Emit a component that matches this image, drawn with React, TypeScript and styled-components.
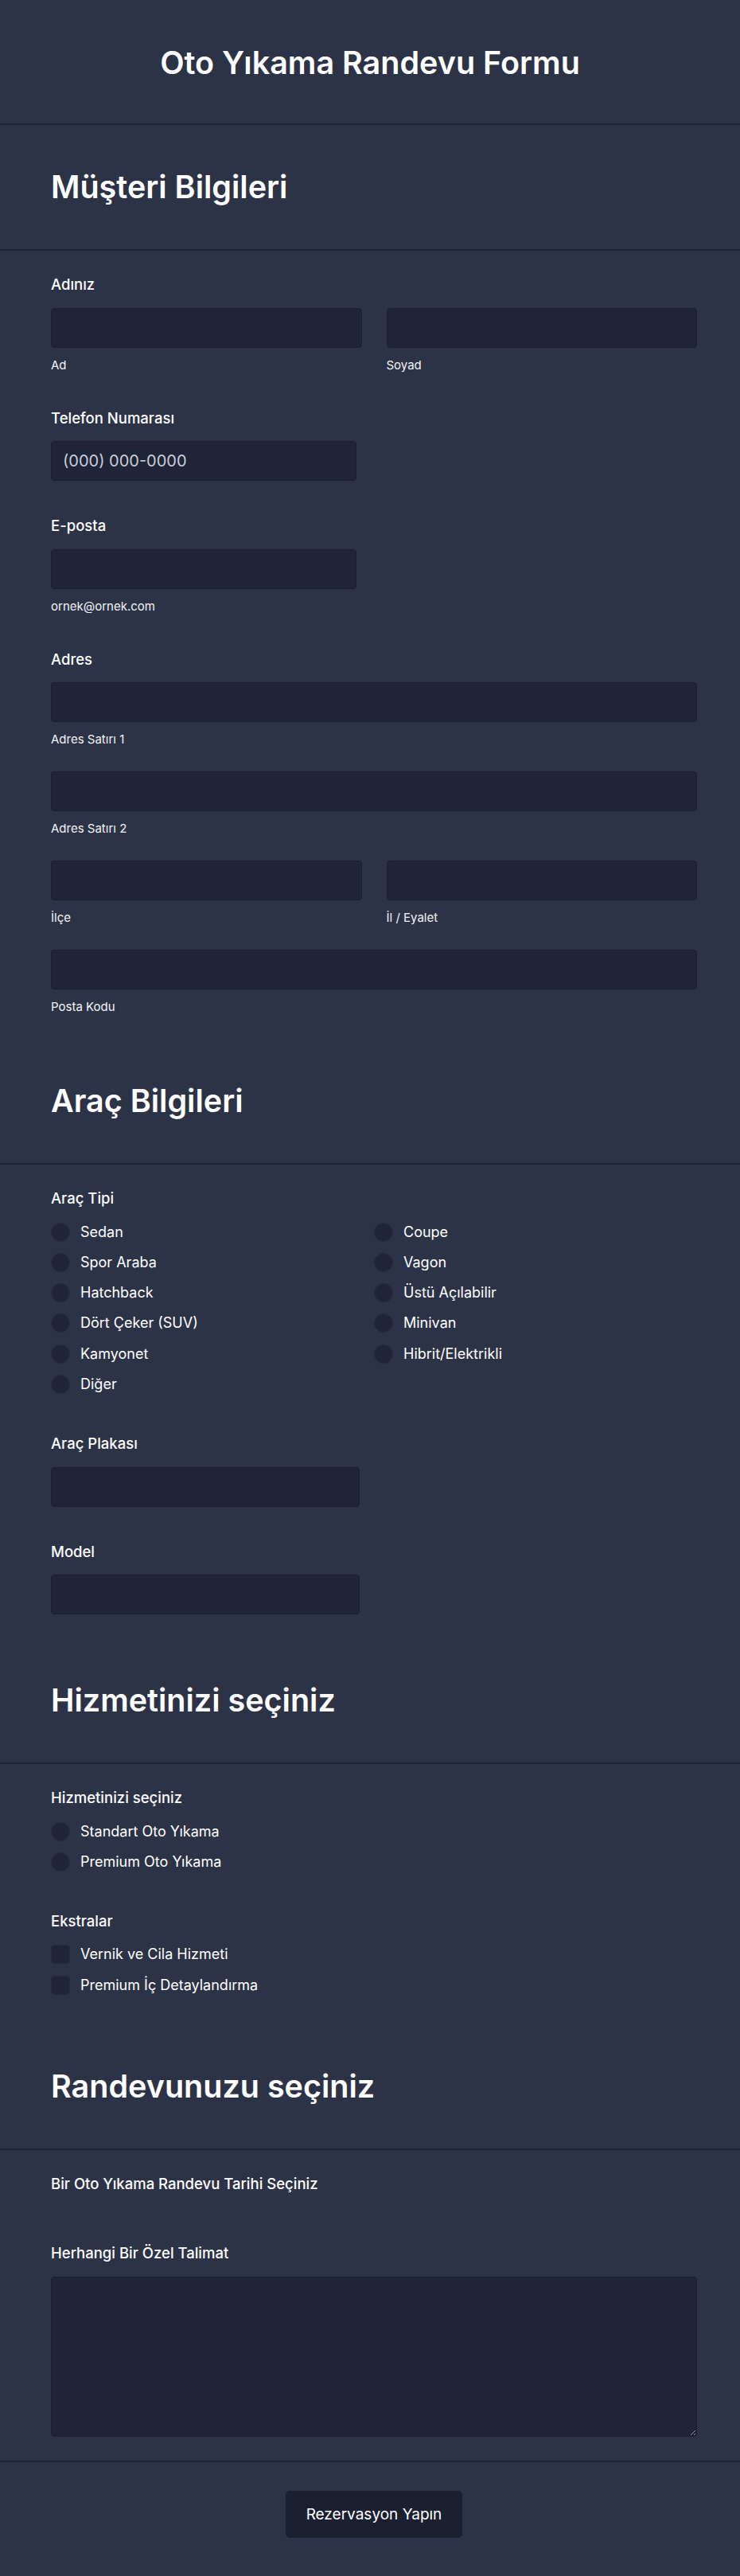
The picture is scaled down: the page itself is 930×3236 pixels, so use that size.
import React from "react";
import styled, { createGlobalStyle } from "styled-components";

const GlobalStyle = createGlobalStyle`
  * {
    box-sizing: border-box;
  }
  body {
    margin: 0;
    background: #2d3346;
    font-family: Inter, "Noto Sans", sans-serif;
    color: #ffffff;
  }
`;

const Page = styled.div`
  min-height: 3236px;
  background: #2d3346;
`;

const Header = styled.header`
  padding: 55px 64px 52px 64px;
  border-bottom: 2px solid #1e2232;
  text-align: center;
`;

const Title = styled.h1`
  margin: 0;
  font-size: 39.5px;
  line-height: 48px;
  font-weight: 600;
`;

const SectionHead = styled.div`
  padding: 54px 54px 54px 64px;
  border-bottom: 2px solid #1e2232;
`;

const Heading = styled.h2`
  margin: 0;
  font-size: 39.5px;
  line-height: 48px;
  font-weight: 600;
`;

const Fields = styled.div`
  padding: 30px 54px 30px 64px;
  display: flex;
  flex-direction: column;
`;

const Field = styled.div<{ $extra?: number }>`
  display: flex;
  flex-direction: column;
  margin-bottom: ${(p) => 44 + (p.$extra ?? 0)}px;

  &:last-child {
    margin-bottom: ${(p) => p.$extra ?? 0}px;
  }
`;

const Label = styled.label`
  font-size: 18.5px;
  line-height: 24px;
  font-weight: 500;
  margin-bottom: 17.5px;
`;

const Row = styled.div`
  display: grid;
  grid-template-columns: 1fr 1fr;
  column-gap: 31px;
`;

const Stack = styled.div`
  display: flex;
  flex-direction: column;
  gap: 30px;
`;

const Cell = styled.div`
  display: flex;
  flex-direction: column;
`;

const Input = styled.input<{ $width?: number }>`
  width: ${(p) => (p.$width ? `${p.$width}px` : "100%")};
  height: 50px;
  padding: 0 14px;
  background: #1f2437;
  border: 1px solid #1b1f30;
  border-radius: 4px;
  color: #ffffff;
  font-family: Inter, "Noto Sans", sans-serif;
  font-size: 20px;
  outline: none;

  &::placeholder {
    color: #c9ceda;
  }
`;

const TextArea = styled.textarea`
  width: 100%;
  height: 201px;
  padding: 12px 14px;
  background: #1f2437;
  border: 1px solid #1b1f30;
  border-radius: 4px;
  color: #ffffff;
  font-family: Inter, "Noto Sans", sans-serif;
  font-size: 18px;
  outline: none;
  display: block;
`;

const SubLabel = styled.span`
  margin-top: 12px;
  font-size: 15px;
  line-height: 20px;
  color: #f2f3f6;
`;

const Options = styled.div<{ $cols?: number }>`
  display: grid;
  grid-template-columns: repeat(${(p) => p.$cols ?? 1}, 1fr);
  grid-auto-flow: ${(p) => ((p.$cols ?? 1) > 1 ? "column" : "row")};
  grid-template-rows: ${(p) => ((p.$cols ?? 1) > 1 ? "repeat(6, 24px)" : "none")};
  row-gap: 14.33px;
  margin-top: 1px;
`;

const Option = styled.label`
  display: flex;
  align-items: center;
  gap: 13px;
  height: 24px;
  font-size: 18px;
  line-height: 24px;
`;

const Radio = styled.input.attrs({ type: "radio" })`
  appearance: none;
  margin: 0;
  width: 24px;
  height: 24px;
  flex: none;
  border-radius: 50%;
  background: #1f2437;
  border: 1px solid #262b3e;
`;

const Check = styled.input.attrs({ type: "checkbox" })`
  appearance: none;
  margin: 0;
  width: 24px;
  height: 24px;
  flex: none;
  border-radius: 4px;
  background: #1f2437;
  border: 1px solid #262b3e;
`;

const Footer = styled.div`
  padding: 36px 54px 50px 64px;
  border-top: 2px solid #1e2232;
  display: flex;
  justify-content: center;
`;

const Submit = styled.button`
  width: 222px;
  height: 59px;
  padding: 0;
  background: #1b2030;
  border: 1px solid #1a1e2d;
  border-radius: 5px;
  color: #ffffff;
  font-family: Inter, "Noto Sans", sans-serif;
  font-size: 19px;
  cursor: pointer;
`;

const vehicleTypes = [
  "Sedan",
  "Spor Araba",
  "Hatchback",
  "Dört Çeker (SUV)",
  "Kamyonet",
  "Diğer",
  "Coupe",
  "Vagon",
  "Üstü Açılabilir",
  "Minivan",
  "Hibrit/Elektrikli",
];

export default function App() {
  return (
    <Page>
      <GlobalStyle />
      <Header>
        <Title>Oto Yıkama Randevu Formu</Title>
      </Header>

      <SectionHead>
        <Heading>Müşteri Bilgileri</Heading>
      </SectionHead>
      <Fields>
        <Field>
          <Label>Adınız</Label>
          <Row>
            <Cell>
              <Input type="text" />
              <SubLabel>Ad</SubLabel>
            </Cell>
            <Cell>
              <Input type="text" />
              <SubLabel>Soyad</SubLabel>
            </Cell>
          </Row>
        </Field>
        <Field>
          <Label>Telefon Numarası</Label>
          <Input type="tel" placeholder="(000) 000-0000" $width={384} />
        </Field>
        <Field>
          <Label>E-posta</Label>
          <Input type="email" $width={384} />
          <SubLabel>ornek@ornek.com</SubLabel>
        </Field>
        <Field>
          <Label>Adres</Label>
          <Stack>
            <Cell>
              <Input type="text" />
              <SubLabel>Adres Satırı 1</SubLabel>
            </Cell>
            <Cell>
              <Input type="text" />
              <SubLabel>Adres Satırı 2</SubLabel>
            </Cell>
            <Row>
              <Cell>
                <Input type="text" />
                <SubLabel>İlçe</SubLabel>
              </Cell>
              <Cell>
                <Input type="text" />
                <SubLabel>İl / Eyalet</SubLabel>
              </Cell>
            </Row>
            <Cell>
              <Input type="text" />
              <SubLabel>Posta Kodu</SubLabel>
            </Cell>
          </Stack>
        </Field>
      </Fields>

      <SectionHead>
        <Heading>Araç Bilgileri</Heading>
      </SectionHead>
      <Fields>
        <Field $extra={6}>
          <Label>Araç Tipi</Label>
          <Options $cols={2}>
            {vehicleTypes.map((t) => (
              <Option key={t}>
                <Radio name="vehicle" />
                {t}
              </Option>
            ))}
          </Options>
        </Field>
        <Field>
          <Label>Araç Plakası</Label>
          <Input type="text" $width={388} />
        </Field>
        <Field>
          <Label>Model</Label>
          <Input type="text" $width={388} />
        </Field>
      </Fields>

      <SectionHead>
        <Heading>Hizmetinizi seçiniz</Heading>
      </SectionHead>
      <Fields>
        <Field $extra={6}>
          <Label>Hizmetinizi seçiniz</Label>
          <Options>
            <Option>
              <Radio name="service" />
              Standart Oto Yıkama
            </Option>
            <Option>
              <Radio name="service" />
              Premium Oto Yıkama
            </Option>
          </Options>
        </Field>
        <Field $extra={7}>
          <Label>Ekstralar</Label>
          <Options>
            <Option>
              <Check />
              Vernik ve Cila Hizmeti
            </Option>
            <Option>
              <Check />
              Premium İç Detaylandırma
            </Option>
          </Options>
        </Field>
      </Fields>

      <SectionHead>
        <Heading>Randevunuzu seçiniz</Heading>
      </SectionHead>
      <Fields>
        <Field $extra={2}>
          <Label>Bir Oto Yıkama Randevu Tarihi Seçiniz</Label>
        </Field>
        <Field>
          <Label>Herhangi Bir Özel Talimat</Label>
          <TextArea />
        </Field>
      </Fields>
      <Footer>
        <Submit type="button">Rezervasyon Yapın</Submit>
      </Footer>
    </Page>
  );
}
